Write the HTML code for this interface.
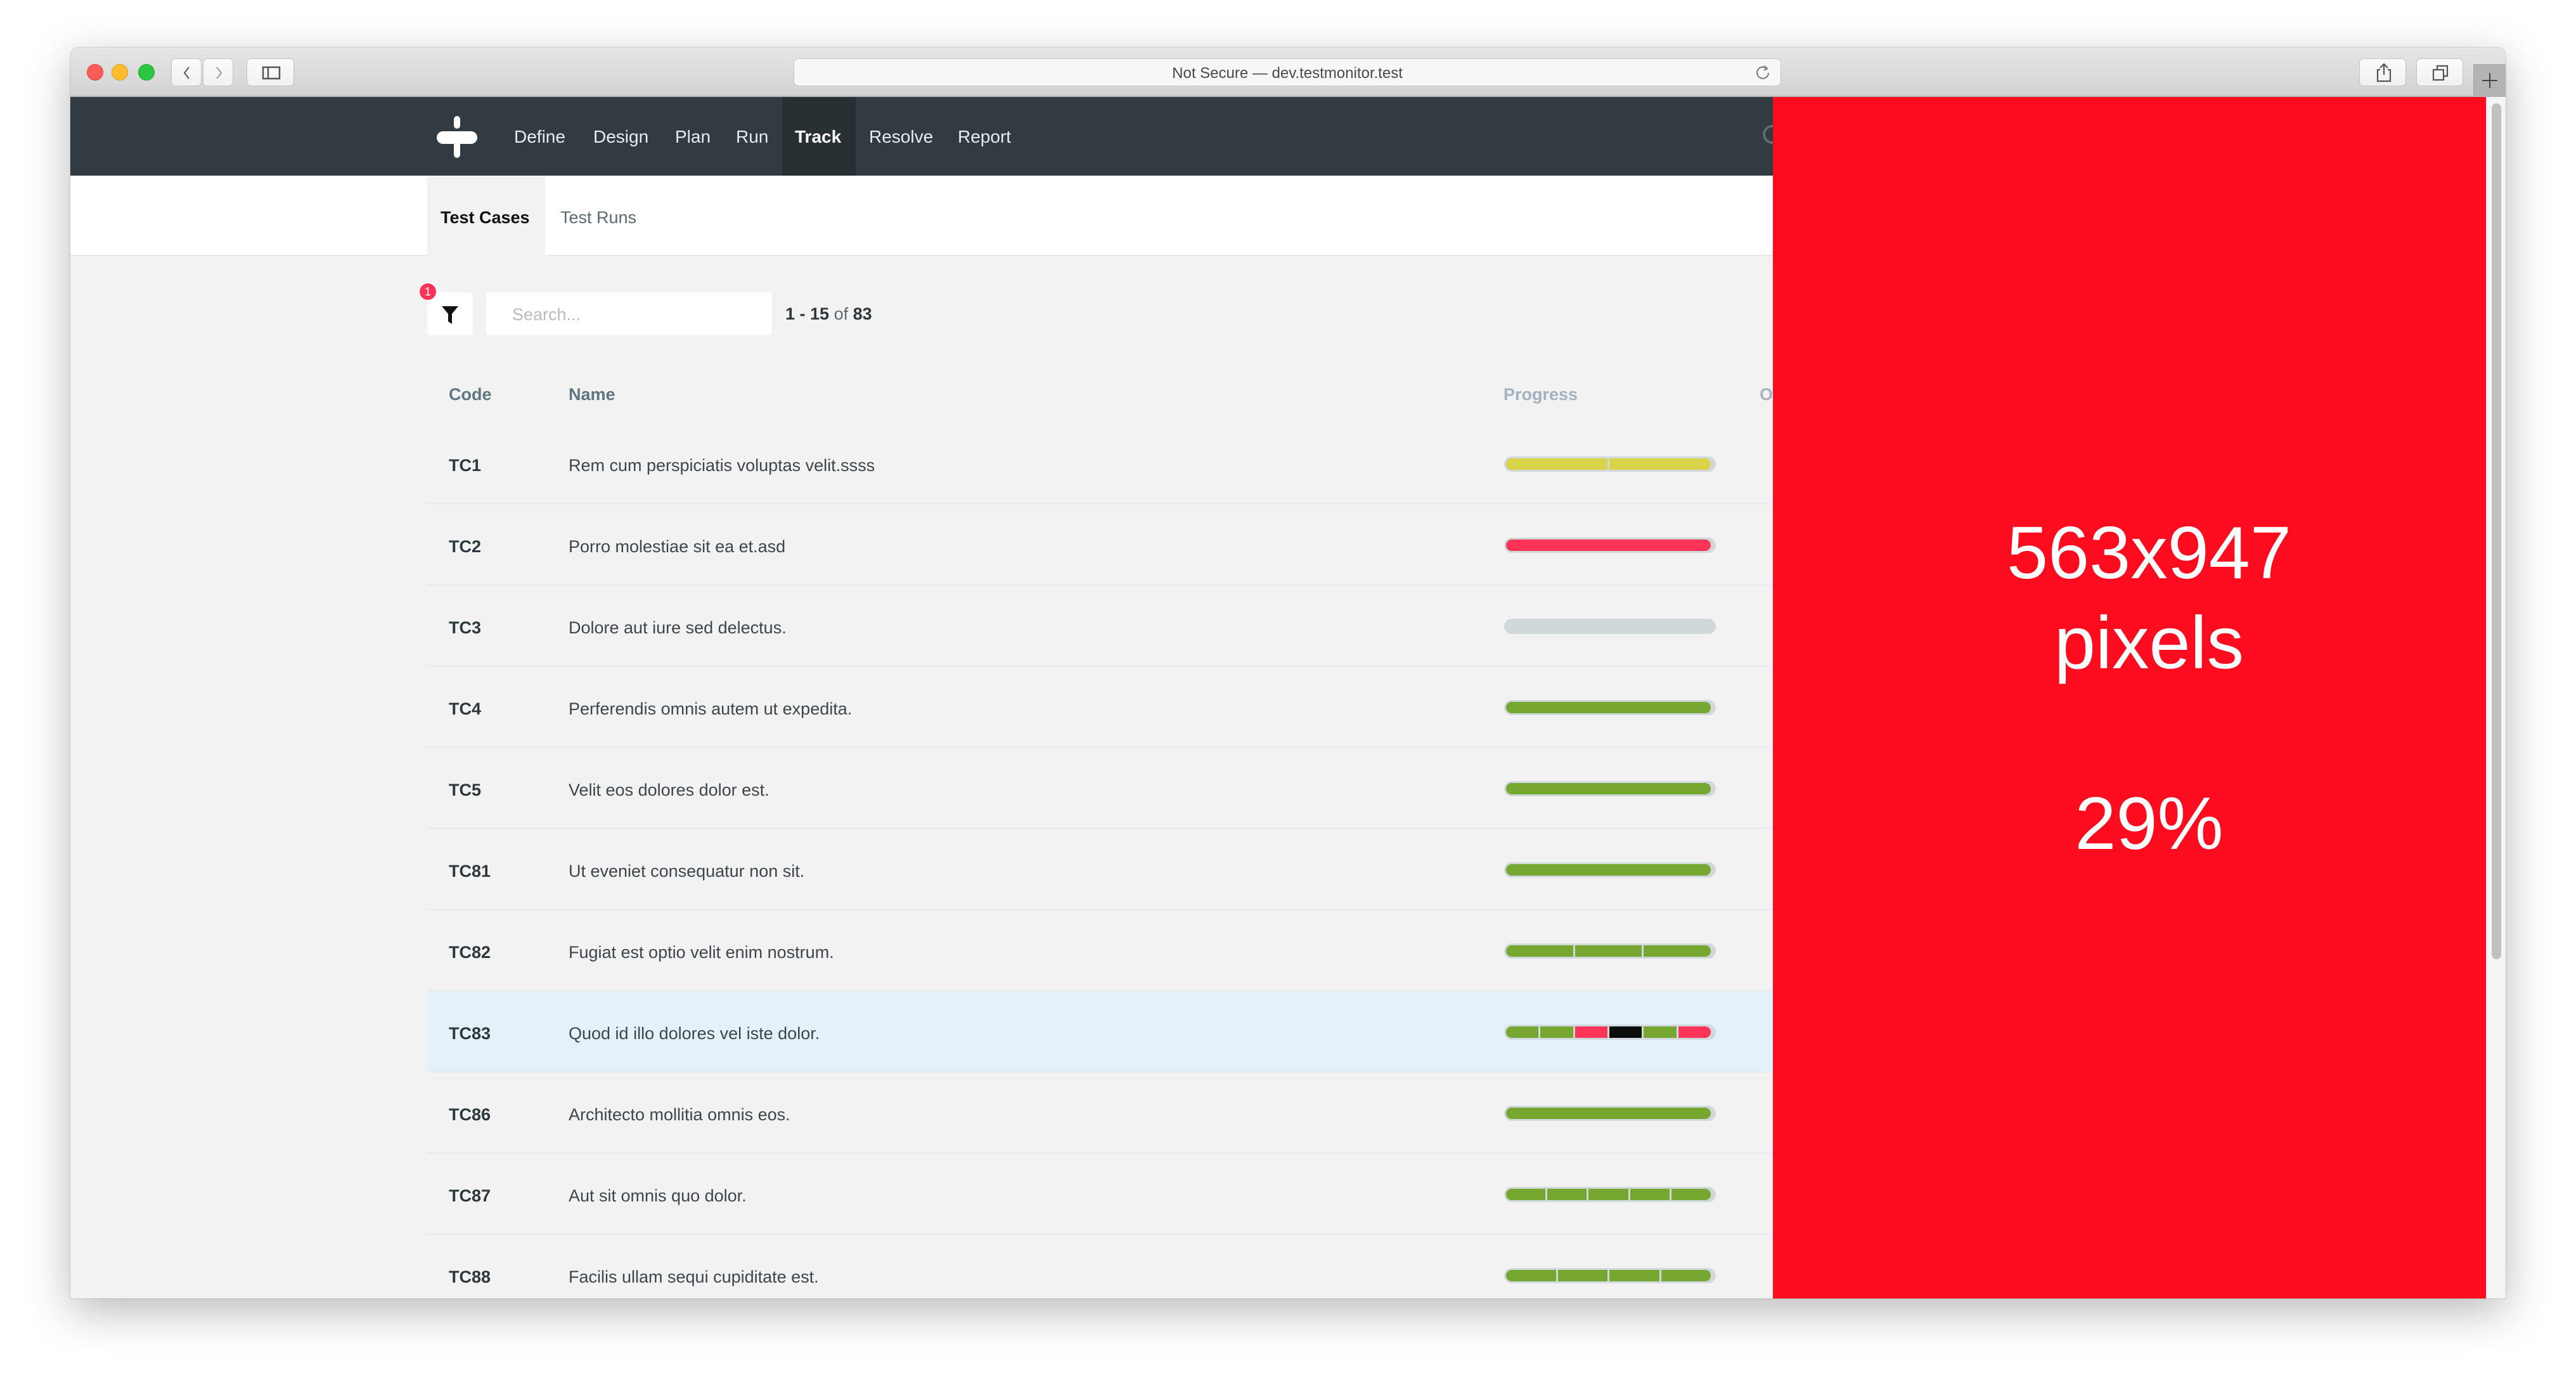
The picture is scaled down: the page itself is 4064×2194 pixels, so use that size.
<!DOCTYPE html>
<html><head><meta charset="utf-8">
<style>
*{margin:0;padding:0;box-sizing:border-box}
body{width:4064px;height:2194px;background:#fff;position:relative;overflow:hidden;font-family:"Liberation Sans",sans-serif}
.a{position:absolute}
.win{left:111px;top:75px;width:3842px;height:1973px;border-radius:12px 12px 0 0;overflow:hidden;box-shadow:0 20px 70px rgba(0,0,0,.28),0 0 0 1px rgba(0,0,0,.12);background:#f2f2f2}
.tb{left:0;top:0;width:3842px;height:78px;background:linear-gradient(#e6e6e6,#d2d2d2);border-bottom:2px solid #b5b5b5}
.btn{background:linear-gradient(#fbfbfb,#f1f1f1);border:1px solid #c4c4c4;border-radius:7px;top:17px;height:44px}
.nav{left:0;top:78px;width:2686px;height:124px;background:#313b41}
.nav span{position:absolute;top:47px;font-size:28px;color:#e8ecee}
.sub{left:0;top:202px;width:2686px;height:127px;background:#fff;border-bottom:2px solid #e6e8ea}
.row{position:absolute;left:563px;width:2123px;height:128px;border-bottom:3px solid #e8ecef}
.code{position:absolute;left:34px;top:51px;font-size:27px;font-weight:bold;color:#2d373c}
.nm{position:absolute;left:223px;top:51px;font-size:27px;color:#3c464b}
.bar{position:absolute;left:1699px;top:52px;width:334px;height:24px;border-radius:12px;background:#d0d8dc;padding:3px 8px 3px 3px;display:flex;gap:3px}
.bar i{flex:1;height:18px}
.bar i:first-child{border-radius:9px 0 0 9px}
.bar i:last-child{border-radius:0 9px 9px 0}
.bar i:only-child{border-radius:9px}
.g{background:#76a730}.r{background:#fe3358}.y{background:#d9d44a}.k{background:#0c0c0c}
</style></head><body>
<div class="a win">
 <div class="a tb">
  <div class="a" style="left:26px;top:26px;width:26px;height:26px;border-radius:50%;background:#fd5c55;border:1px solid #e0443e"></div>
  <div class="a" style="left:65px;top:26px;width:26px;height:26px;border-radius:50%;background:#fdbb2e;border:1px solid #dea123"></div>
  <div class="a" style="left:107px;top:26px;width:26px;height:26px;border-radius:50%;background:#29c840;border:1px solid #1aab29"></div>
  <div class="a btn" style="left:159px;width:48px"><svg class="a" style="left:16px;top:10px" width="16" height="24"><path d="M11 3L4 12L11 21" fill="none" stroke="#555" stroke-width="2"/></svg></div>
  <div class="a btn" style="left:209px;width:48px"><svg class="a" style="left:16px;top:10px" width="16" height="24"><path d="M5 3L12 12L5 21" fill="none" stroke="#999" stroke-width="2"/></svg></div>
  <div class="a btn" style="left:278px;width:75px"><svg class="a" style="left:23px;top:10px" width="30" height="24"><rect x="2" y="3" width="26" height="18" fill="none" stroke="#555" stroke-width="2.5"/><line x1="10" y1="3" x2="10" y2="21" stroke="#555" stroke-width="2.5"/></svg></div>
  <div class="a btn" style="left:1141px;width:1558px;background:#f7f7f7;border-radius:8px"><div class="a" style="left:0;width:100%;top:9px;text-align:center;font-size:24px;color:#4a4a4a">Not Secure — dev.testmonitor.test</div><svg class="a" style="right:14px;top:8px" width="24" height="28"><path d="M16 7A9 9 0 1 0 19 14" fill="none" stroke="#777" stroke-width="2"/><path d="M12 3L17 7L12 10" fill="none" stroke="#777" stroke-width="2"/></svg></div>
  <div class="a btn" style="left:3611px;width:74px"><svg class="a" style="left:24px;top:5px" width="28" height="32"><path d="M8 12H4V30H24V12H20M14 20V3M8 9L14 3L20 9" fill="none" stroke="#555" stroke-width="2.2"/></svg></div>
  <div class="a btn" style="left:3701px;width:74px"><svg class="a" style="left:24px;top:8px" width="28" height="28"><rect x="2" y="9" width="16" height="16" fill="none" stroke="#555" stroke-width="2.2"/><path d="M8 9V3H24V19H18" fill="none" stroke="#555" stroke-width="2.2"/></svg></div>
  <div class="a" style="left:3791px;top:26px;width:51px;height:52px;background:#b3b3b3;border-left:1px solid #a5a5a5"><svg class="a" style="left:12px;top:13px" width="26" height="26"><path d="M13 1V25M1 13H25" stroke="#444" stroke-width="2"/></svg></div>
 </div>
 <div class="a nav">
  <svg class="a" style="left:575px;top:30px" width="70" height="66"><rect x="30" y="0" width="10" height="20" rx="5" fill="#fff"/><rect x="3" y="24" width="64" height="20" rx="10" fill="#fff"/><rect x="30" y="26" width="10" height="40" rx="5" fill="#fff"/></svg>
  <div class="a" style="left:1123px;top:0;width:116px;height:124px;background:#283034"></div>
  <span style="left:700px">Define</span><span style="left:825px">Design</span><span style="left:954px">Plan</span><span style="left:1050px">Run</span><span style="left:1143px;font-weight:bold;color:#fff">Track</span><span style="left:1260px">Resolve</span><span style="left:1400px">Report</span>
  <div class="a" style="left:2670px;top:44px;width:30px;height:30px;border-radius:50%;border:4px solid #5d6b73"></div>
 </div>
 <div class="a sub">
  <div class="a" style="left:563px;top:0;width:186px;height:127px;background:#f2f2f2"></div>
  <div class="a" style="left:584px;top:51px;font-size:27px;font-weight:bold;color:#111">Test Cases</div>
  <div class="a" style="left:773px;top:51px;font-size:27px;color:#5c6a72">Test Runs</div>
 </div>
 <div class="a" style="left:563px;top:386px;width:72px;height:68px;background:#fff;border-radius:6px"><svg class="a" style="left:23px;top:22px" width="26" height="28"><path d="M0 0H26L16 12V28L10 24V12Z" fill="#111"/></svg></div>
 <div class="a" style="left:549px;top:370px;width:30px;height:30px;border-radius:50%;background:#fe3358;border:2px solid #fff;color:#fff;font-size:18px;text-align:center;line-height:26px">1</div>
 <div class="a" style="left:656px;top:386px;width:451px;height:68px;background:#fff;border-radius:6px;font-size:27px;color:#bbb;padding:20px 0 0 41px">Search...</div>
 <div class="a" style="left:1128px;top:405px;font-size:27px;color:#2d373c"><b>1 - 15</b> <span style="color:#5c6a72">of</span> <b>83</b></div>
 <div class="a" style="left:597px;top:532px;font-size:27px;font-weight:bold;color:#5f7580">Code</div>
 <div class="a" style="left:786px;top:532px;font-size:27px;font-weight:bold;color:#5f7580">Name</div>
 <div class="a" style="left:2261px;top:532px;font-size:27px;font-weight:bold;color:#a3b3bb">Progress</div>
 <div class="a" style="left:2665px;top:532px;font-size:27px;font-weight:bold;color:#a3b3bb">O</div>

 <div class="row" style="top:593px"><div class="code">TC1</div><div class="nm">Rem cum perspiciatis voluptas velit.ssss</div><div class="bar"><i class="y"></i><i class="y"></i></div></div>
 <div class="row" style="top:721px"><div class="code">TC2</div><div class="nm">Porro molestiae sit ea et.asd</div><div class="bar"><i class="r"></i></div></div>
 <div class="row" style="top:849px"><div class="code">TC3</div><div class="nm">Dolore aut iure sed delectus.</div><div class="bar"></div></div>
 <div class="row" style="top:977px"><div class="code">TC4</div><div class="nm">Perferendis omnis autem ut expedita.</div><div class="bar"><i class="g"></i></div></div>
 <div class="row" style="top:1105px"><div class="code">TC5</div><div class="nm">Velit eos dolores dolor est.</div><div class="bar"><i class="g"></i></div></div>
 <div class="row" style="top:1233px"><div class="code">TC81</div><div class="nm">Ut eveniet consequatur non sit.</div><div class="bar"><i class="g"></i></div></div>
 <div class="row" style="top:1361px"><div class="code">TC82</div><div class="nm">Fugiat est optio velit enim nostrum.</div><div class="bar"><i class="g"></i><i class="g"></i><i class="g"></i></div></div>
 <div class="row" style="top:1489px;background:#e5f1f9"><div class="code">TC83</div><div class="nm">Quod id illo dolores vel iste dolor.</div><div class="bar"><i class="g"></i><i class="g"></i><i class="r"></i><i class="k"></i><i class="g"></i><i class="r"></i></div></div>
 <div class="row" style="top:1617px"><div class="code">TC86</div><div class="nm">Architecto mollitia omnis eos.</div><div class="bar"><i class="g"></i></div></div>
 <div class="row" style="top:1745px"><div class="code">TC87</div><div class="nm">Aut sit omnis quo dolor.</div><div class="bar"><i class="g"></i><i class="g"></i><i class="g"></i><i class="g"></i><i class="g"></i></div></div>
 <div class="row" style="top:1873px"><div class="code">TC88</div><div class="nm">Facilis ullam sequi cupiditate est.</div><div class="bar"><i class="g"></i><i class="g"></i><i class="g"></i><i class="g"></i></div></div>

 <div class="a" style="left:2686px;top:78px;width:1125px;height:1895px;background:#fd0b1f;color:#fff;text-align:center;font-size:117px;line-height:1">
  <div class="a" style="left:62px;width:1063px;top:660px">563x947</div>
  <div class="a" style="left:62px;width:1063px;top:802px">pixels</div>
  <div class="a" style="left:62px;width:1063px;top:1087px">29%</div>
 </div>
 <div class="a" style="left:3811px;top:78px;width:31px;height:1895px;background:#f5f5f5;border-left:1px solid #e2e2e2"><div class="a" style="left:8px;top:10px;width:15px;height:1350px;border-radius:8px;background:#c1c1c1"></div></div>
</div>
</body></html>
